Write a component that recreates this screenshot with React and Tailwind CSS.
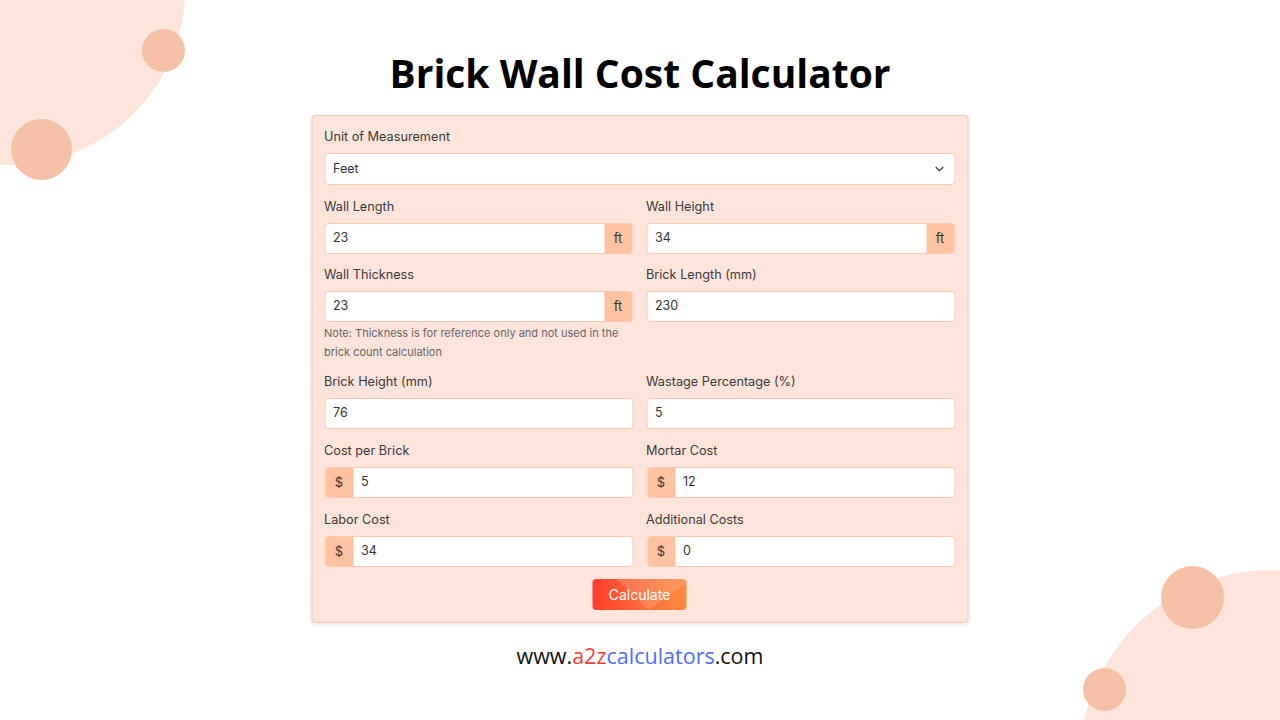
import React from 'react';
import { ChevronDown } from 'lucide-react';

const FONT = { fontFamily: 'Inter, "Noto Sans", sans-serif' };

function Label({ children }) {
    return <div className="text-[12.7px] leading-[20px] text-[#3a3a3a] mb-1.5">{children}</div>;
}

function Field({ label, value, suffix, prefix, children }) {
    return (
        <div>
            <Label>{label}</Label>
            <div className="flex h-[31px] rounded-[4px] border border-[#fbc9b2] overflow-hidden bg-white">
                {prefix && (
                    <div className="w-[28px] flex items-center justify-center bg-[#ffc3a1] text-[13px] text-[#333]">{prefix}</div>
                )}
                <div className="flex-1 flex items-center pl-2 text-[12.5px] text-[#333]">{value}</div>
                {suffix && (
                    <div className="w-[28px] flex items-center justify-center bg-[#ffc3a1] text-[13px] text-[#333]">{suffix}</div>
                )}
            </div>
            {children}
        </div>
    );
}

export default function App() {
    return (
        <div className="relative w-[1280px] h-[720px] overflow-hidden bg-white" style={FONT}>
            {/* Decorative circles */}
            <div className="absolute left-[-165px] top-[-185px] w-[350px] h-[350px] rounded-full bg-[#fee5dc]" />
            <div className="absolute left-[142px] top-[29px] w-[43px] h-[43px] rounded-full bg-[#f5c0a5]" />
            <div className="absolute left-[11px] top-[119px] w-[61px] h-[61px] rounded-full bg-[#f5c0a5]" />
            <div className="absolute left-[1080px] top-[570px] w-[380px] h-[380px] rounded-full bg-[#fee5dc]" />
            <div className="absolute left-[1161px] top-[566px] w-[63px] h-[63px] rounded-full bg-[#f5c0a5]" />
            <div className="absolute left-[1083px] top-[668px] w-[43px] h-[43px] rounded-full bg-[#f5c0a5]" />

            <div className="relative flex flex-col items-center pt-[48px]">
                <h1
                    className="text-[39px] leading-[50px] font-bold text-black"
                    style={{ fontFamily: '"Open Sans", sans-serif' }}
                >
                    Brick Wall Cost Calculator
                </h1>

                <div className="mt-[17px] w-[657px] -translate-x-[0.5px] rounded-[4px] border border-[#f6cbb8] bg-[#fee4db] shadow-[0_1px_4px_rgba(0,0,0,0.12)] px-[12px] pt-[11px] pb-[12px]">
                    <Label>Unit of Measurement</Label>
                    <div className="flex items-center justify-between h-[32px] rounded-[4px] border border-[#fbc9b2] bg-white pl-2 pr-2 text-[12.5px] text-[#333]">
                        <span>Feet</span>
                        <ChevronDown size={14} strokeWidth={2} className="text-[#444]" />
                    </div>

                    <div className="grid grid-cols-2 gap-x-[13px] mt-3">
                        <Field label="Wall Length" value="23" suffix="ft" />
                        <Field label="Wall Height" value="34" suffix="ft" />
                    </div>

                    <div className="grid grid-cols-2 gap-x-[13px] mt-[11px]">
                        <Field label="Wall Thickness" value="23" suffix="ft">
                            <p className="mt-[2px] text-[11px] leading-[19px] text-[#666] pr-2">
                                Note: Thickness is for reference only and not used in the brick count calculation
                            </p>
                        </Field>
                        <Field label="Brick Length (mm)" value="230" />
                    </div>

                    <div className="grid grid-cols-2 gap-x-[13px] mt-[10px]">
                        <Field label="Brick Height (mm)" value="76" />
                        <Field label="Wastage Percentage (%)" value="5" />
                    </div>

                    <div className="grid grid-cols-2 gap-x-[13px] mt-3">
                        <Field label="Cost per Brick" value="5" prefix="$" />
                        <Field label="Mortar Cost" value="12" prefix="$" />
                    </div>

                    <div className="grid grid-cols-2 gap-x-[13px] mt-3">
                        <Field label="Labor Cost" value="34" prefix="$" />
                        <Field label="Additional Costs" value="0" prefix="$" />
                    </div>

                    <div className="flex justify-center mt-3">
                        <button className="relative w-[94px] h-[31px] rounded-[4px] overflow-hidden bg-gradient-to-r from-[#ff3a2e] to-[#ff8a3f] text-white text-[14px]">
                            <svg className="absolute inset-0" width="94" height="31" viewBox="0 0 94 31">
                                <polygon points="24,0 94,0 94,4 56,31" fill="rgba(255,255,255,0.16)" />
                            </svg>
                            <span className="relative">Calculate</span>
                        </button>
                    </div>
                </div>

                <div
                    className="mt-[18px] text-[21.5px] leading-[30px] text-[#111]"
                    style={{ fontFamily: '"Open Sans", sans-serif' }}
                >
                    www.<span className="text-[#ff3b30]">a2z</span>
                    <span className="text-[#4f6ef7]">calculators</span>.com
                </div>
            </div>
        </div>
    );
}
